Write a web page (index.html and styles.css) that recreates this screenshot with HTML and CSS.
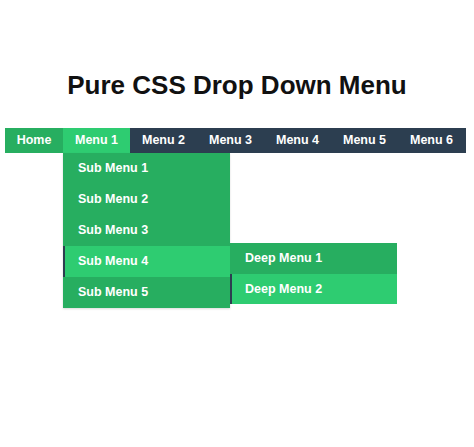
FILE: index.html
```html
<!DOCTYPE html>
<html lang="en">
<head>
    <meta charset="UTF-8">
    <meta name="viewport" content="width=device-width, initial-scale=1.0">
    <title>Pure CSS Drop Down Menu</title>
    <link rel="stylesheet" href="styles.css">
</head>
<body>
    <h1>Pure CSS Drop Down Menu</h1>

    <div class="bar">
        <div class="bar-item home"><a class="bar-link" href="#">Home</a></div>
        <div class="bar-item current">
            <a class="bar-link" href="#">Menu 1</a>
            <div class="panel">
                <a class="panel-link" href="#">Sub Menu 1</a>
                <a class="panel-link" href="#">Sub Menu 2</a>
                <a class="panel-link" href="#">Sub Menu 3</a>
                <div class="panel-row">
                    <a class="panel-link selected" href="#">Sub Menu 4</a>
                    <div class="side-panel">
                        <a class="panel-link" href="#">Deep Menu 1</a>
                        <a class="panel-link selected" href="#">Deep Menu 2</a>
                    </div>
                </div>
                <a class="panel-link" href="#">Sub Menu 5</a>
            </div>
        </div>
        <div class="bar-item"><a class="bar-link" href="#">Menu 2</a></div>
        <div class="bar-item"><a class="bar-link" href="#">Menu 3</a></div>
        <div class="bar-item"><a class="bar-link" href="#">Menu 4</a></div>
        <div class="bar-item"><a class="bar-link" href="#">Menu 5</a></div>
        <div class="bar-item"><a class="bar-link" href="#">Menu 6</a></div>
    </div>
</body>
</html>
```

FILE: styles.css
```css
* {
    margin: 0;
    padding: 0;
    box-sizing: border-box;
    font-family: "Liberation Sans", Arial, sans-serif;
}

html,
body {
    min-height: 100vh;
}

body {
    background: #fff;
    overflow: visible;
}

h1 {
    margin: 70px 0 28px;
    font-size: 26px;
    line-height: 30px;
    text-align: center;
    color: #111;
}

.bar {
    display: flex;
    width: 461px;
    margin-left: 5px;
    background: #2c3e50;
}

.bar-item {
    position: relative;
    flex: 0 0 67px;
}

.bar-item.home {
    flex-basis: 58px;
}

.bar-link,
.panel-link {
    display: block;
    color: #fff;
    font-size: 12.5px;
    font-weight: bold;
    text-decoration: none;
    white-space: nowrap;
}

.bar-link {
    line-height: 25px;
    text-align: center;
}

.home .bar-link {
    background: #27ae60;
}

.current .bar-link {
    background: #2ecc71;
}

/* first level dropdown */
.panel {
    position: absolute;
    top: 25px;
    left: 0;
    z-index: 10;
    width: 167px;
    background: #27ae60;
    box-shadow: 0 1px 2px rgba(0,0,0,0.15);
}

.panel-row {
    position: relative;
}

.panel-link {
    padding-left: 15px;
    line-height: 31px;
}

.panel-link.selected {
    background: #2ecc71;
    border-left: 2px solid #2c3e50;
    padding-left: 13px;
}

/* second level dropdown */
.side-panel {
    position: absolute;
    top: -3px;
    left: 100%;
    width: 167px;
    background: #27ae60;
}

.side-panel .panel-link {
    line-height: 30.5px;
}
```
